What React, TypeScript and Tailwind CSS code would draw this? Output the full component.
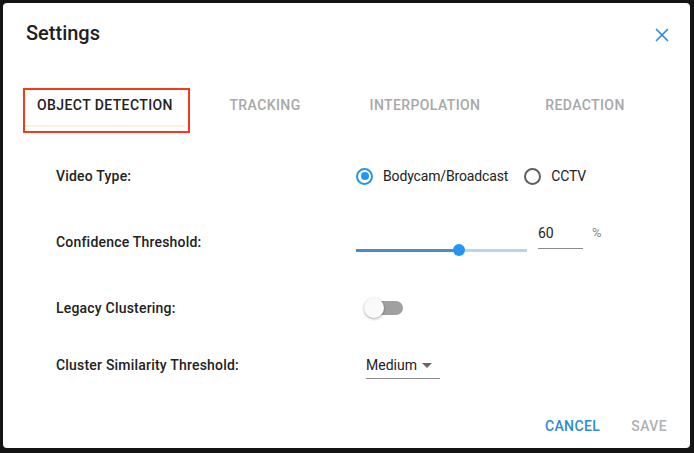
import { X } from 'lucide-react'

const font = { fontFamily: 'Roboto, "Noto Sans", Arial, sans-serif' }

const tabs = ['Object Detection', 'Tracking', 'Interpolation', 'Redaction']

function Radio({ checked, label }: { checked: boolean; label: string }) {
  return (
    <div className="flex items-center">
      <div
        className={`w-[17px] h-[17px] rounded-full border-2 flex items-center justify-center ${
          checked ? 'border-[#2196f3]' : 'border-[#5f5f5f]'
        }`}
      >
        {checked && <div className="w-[8px] h-[8px] rounded-full bg-[#2196f3]" />}
      </div>
      <span className="ml-[10px] text-[14px] leading-[20px] tracking-[-0.15px] text-[#222]">{label}</span>
    </div>
  )
}

export default function App() {
  return (
    <div className="w-[694px] h-[453px] bg-[#141414] p-[3px]" style={font}>
      <div className="relative w-[687px] h-[445px] bg-white rounded-[4px] flex flex-col">
        {/* Header */}
        <div className="flex items-start justify-between pl-[23px] pr-[17px] pt-[17px]">
          <h2 className="text-[20px] leading-[26px] font-medium text-[#212121]">Settings</h2>
          <button className="mt-[4px] text-[#2f8bd6]">
            <X size={22} strokeWidth={1.8} />
          </button>
        </div>

        {/* Tabs */}
        <div className="flex ml-[22px] mt-[35px] h-[48px]">
          {tabs.map((t, i) => (
            <div
              key={t}
              className={`relative w-[160px] flex items-center justify-center uppercase text-[14px] font-medium tracking-[0.4px] ${
                i === 0 ? 'text-[#222]' : 'text-[#a8a8a8]'
              }`}
            >
              {t}
              {i === 0 && <div className="absolute left-0 right-0 bottom-[2px] h-[2px] bg-[#fdf0de]" />}
            </div>
          ))}
        </div>

        {/* Annotation box */}
        <div className="absolute left-[20px] top-[85px] w-[167px] h-[45px] border-2 border-[#f23a1c]" />

        {/* Video type */}
        <div className="flex items-center h-[32px] mt-[31px] pl-[53px]">
          <div className="w-[300px] text-[14px] font-medium tracking-[0.2px] text-[#222]">Video Type:</div>
          <div className="flex items-center gap-[16px]">
            <Radio checked label="Bodycam/Broadcast" />
            <Radio checked={false} label="CCTV" />
          </div>
        </div>

        {/* Confidence */}
        <div className="flex h-[44px] mt-[28px] pl-[53px]">
          <div className="w-[300px] self-center text-[14px] font-medium tracking-[0.2px] text-[#222]">Confidence Threshold:</div>
          <div className="flex items-start">
            <div className="relative w-[171px] mt-[29px] h-[3px] bg-[#b9d5ee]">
              <div className="h-full w-[103px] bg-[#4a8cc7]" />
              <div className="absolute left-[97px] top-[-5px] w-[12px] h-[12px] rounded-full bg-[#2196f3]" />
            </div>
            <div className="ml-[11px] w-[45px] h-[29px] pt-[3px] border-b border-[#8c8c8c] text-[14px] leading-[20px] text-[#222]">
              60
            </div>
            <div className="ml-[9px] pt-[3px] text-[13px] leading-[20px] text-[#8a8a8a]">%</div>
          </div>
        </div>

        {/* Legacy clustering */}
        <div className="flex items-center h-[32px] mt-[28px] pl-[53px]">
          <div className="w-[300px] text-[14px] font-medium tracking-[0.2px] text-[#222]">Legacy Clustering:</div>
          <div className="relative ml-[11px] w-[36px] h-[14px] rounded-full bg-[#a0a0a0]">
            <div className="absolute left-[-3px] top-[-3px] w-[20px] h-[20px] rounded-full bg-[#fafafa] shadow-[0_1px_3px_rgba(0,0,0,0.35)]" />
          </div>
        </div>

        {/* Cluster similarity */}
        <div className="flex items-start h-[32px] mt-[25px] pl-[53px]">
          <div className="w-[300px] self-center text-[14px] font-medium tracking-[0.2px] text-[#222]">Cluster Similarity Threshold:</div>
          <div className="ml-[10px] mt-[6px] w-[74px] h-[24px] pb-[3px] border-b border-[#8c8c8c] flex items-center justify-between">
            <span className="text-[14px] leading-[20px] text-[#222]">Medium</span>
            <span className="mr-[8px] w-0 h-0 border-l-[5px] border-r-[5px] border-t-[5px] border-l-transparent border-r-transparent border-t-[#666]" />
          </div>
        </div>

        {/* Footer */}
        <div className="mt-auto flex justify-end gap-[31px] pr-[23px] pb-[12px]">
          <button className="uppercase text-[14px] leading-[20px] font-medium tracking-[0.4px] text-[#2d8ad6]">Cancel</button>
          <button className="uppercase text-[14px] leading-[20px] font-medium tracking-[0.4px] text-[#b0b0b0]">Save</button>
        </div>
      </div>
    </div>
  )
}
